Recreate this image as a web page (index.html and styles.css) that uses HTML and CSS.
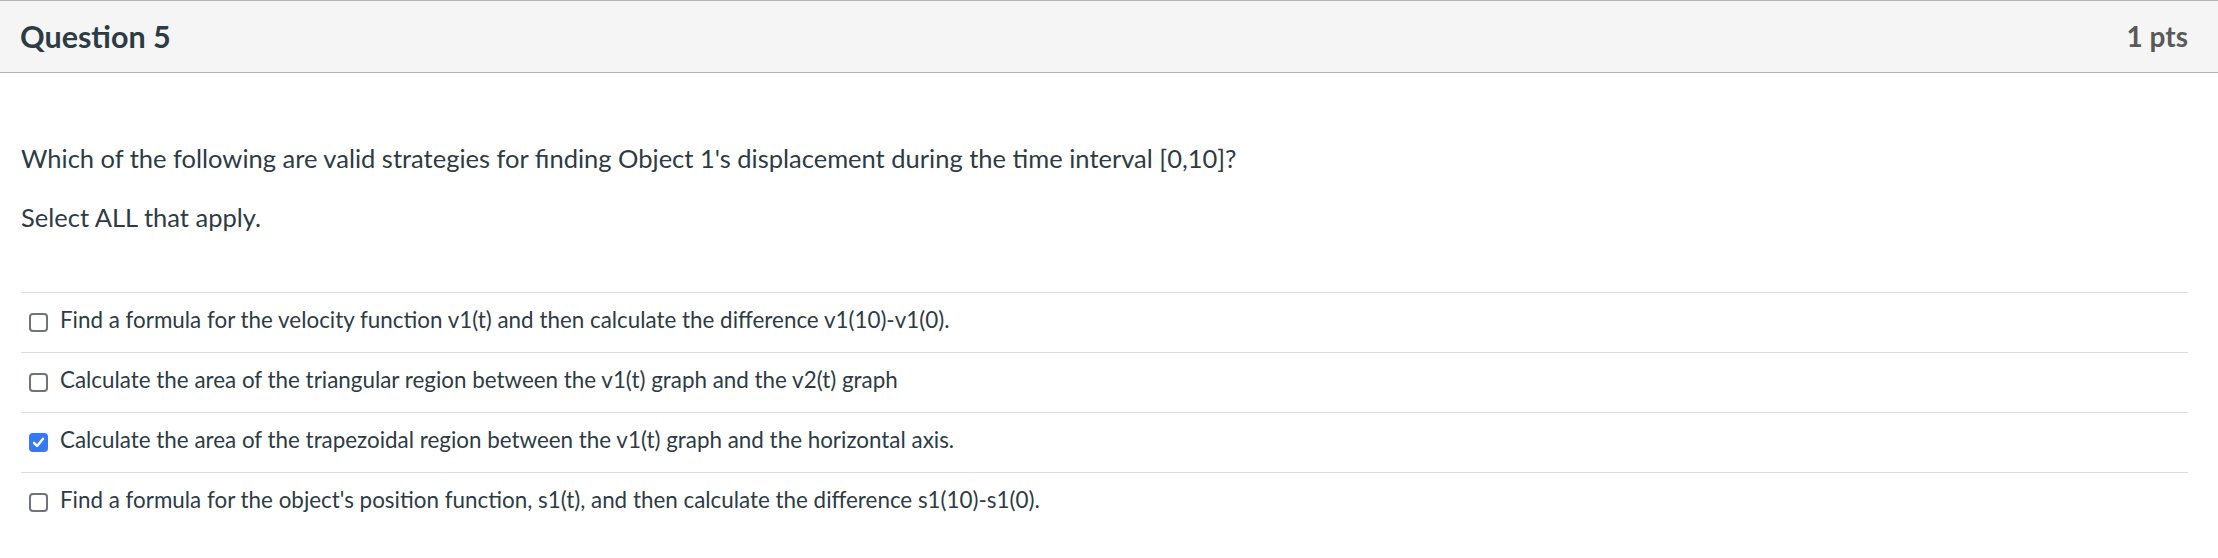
FILE: index.html
```html
<!DOCTYPE html>
<html lang="en">
<head>
<meta charset="utf-8">
<title>Question 5</title>
<link rel="stylesheet" href="styles.css">
</head>
<body>
<div class="question">
  <div class="q-header">
    <span class="q-title">Question 5</span>
    <span class="q-points">1 pts</span>
  </div>
  <div class="q-body">
    <div class="q-text">
      <p>Which of the following are valid strategies for finding Object 1's displacement during the time interval [0,10]?</p>
      <p>Select ALL that apply.</p>
    </div>
    <div class="answers">
      <label class="answer">
        <span class="box"></span>
        <span class="answer-text">Find a formula for the velocity function v1(t) and then calculate the difference v1(10)-v1(0).</span>
      </label>
      <label class="answer">
        <span class="box"></span>
        <span class="answer-text">Calculate the area of the triangular region between the v1(t) graph and the v2(t) graph</span>
      </label>
      <label class="answer">
        <span class="box checked"><svg viewBox="0 0 19 19" width="19" height="19"><path d="M5 9.8 L8.1 13 L14 5.8" fill="none" stroke="#fff" stroke-width="2.4" stroke-linecap="round" stroke-linejoin="round"/></svg></span>
        <span class="answer-text">Calculate the area of the trapezoidal region between the v1(t) graph and the horizontal axis.</span>
      </label>
      <label class="answer">
        <span class="box"></span>
        <span class="answer-text">Find a formula for the object's position function, s1(t), and then calculate the difference s1(10)-s1(0).</span>
      </label>
    </div>
  </div>
</div>
</body>
</html>
```

FILE: styles.css
```css
html, body {
  margin: 0;
  padding: 0;
  background: #ffffff;
}

body {
  font-family: Lato, "Open Sans", "Liberation Sans", sans-serif;
  color: #2d3b45;
}

.question {
  width: 2218px;
}

.q-header {
  display: flex;
  justify-content: space-between;
  align-items: flex-start;
  background: #f5f5f5;
  border-top: 1px solid #b4b4b4;
  border-bottom: 1px solid #b4b4b4;
  padding: 17px 30px 18px 20px;
  height: 36px;
}

.q-title {
  font-size: 30.5px;
  font-weight: 700;
  line-height: 36px;
  color: #2d3b45;
}

.q-points {
  font-size: 28px;
  font-weight: 700;
  line-height: 36px;
  color: #595959;
}

.q-body {
  padding: 67px 30px 40px 21px;
}

.q-text p {
  margin: 0 0 23px 0;
  font-size: 25.5px;
  line-height: 36px;
}

.q-text p:last-child {
  margin-bottom: 0;
}

.answers {
  margin-top: 57px;
}

.answer {
  display: flex;
  align-items: flex-start;
  gap: 12px;
  border-top: 1px solid #dcdcdc;
  padding: 11px 0 16px 8px;
  font-size: 22.4px;
  line-height: 32px;
}

.box {
  flex: none;
  box-sizing: border-box;
  width: 19px;
  height: 19px;
  margin-top: 9px;
  border: 2px solid #6f747a;
  border-radius: 4px;
  background: #fff;
  display: block;
}

.box.checked {
  border: none;
  background: #3478f6;
}

.box svg {
  display: block;
}

.answer-text {
  color: #2d3b45;
}
```
